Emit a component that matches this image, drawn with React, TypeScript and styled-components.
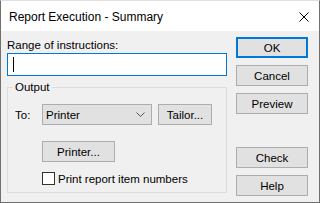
import styled, { createGlobalStyle } from 'styled-components';

const GlobalStyle = createGlobalStyle`
  html, body {
    margin: 0;
    padding: 0;
    background: #ffffff;
  }
  body {
    font-family: 'Liberation Sans', Arial, sans-serif;
    font-size: 11.5px;
    color: #000000;
  }
`;

const ReportDialog = () => {
  return (
    <Styled.Window>
      <Styled.TitleBar>
        <Styled.Title>Report Execution - Summary</Styled.Title>
        <Styled.Close aria-label="Close">
          <svg width="10" height="10" viewBox="0 0 10 10">
            <path d="M0.5 0.5 L9.5 9.5 M9.5 0.5 L0.5 9.5" stroke="#000" strokeWidth="1" fill="none" />
          </svg>
        </Styled.Close>
      </Styled.TitleBar>
      <Styled.Body>
        <Styled.Left>
          <Styled.Label>Range of instructions:</Styled.Label>
          <Styled.TextBox>
            <Styled.Caret />
          </Styled.TextBox>
          <Styled.Group>
            <Styled.Legend>Output</Styled.Legend>
            <Styled.Row>
              <Styled.ToLabel>To:</Styled.ToLabel>
              <Styled.Select>
                <span>Printer</span>
                <svg width="9" height="5" viewBox="0 0 9 5">
                  <path d="M0.5 0.5 L4.5 4.5 L8.5 0.5" stroke="#555" strokeWidth="1" fill="none" />
                </svg>
              </Styled.Select>
              <Styled.Button $width={54}>Tailor...</Styled.Button>
            </Styled.Row>
            <Styled.IndentRow $top={16}>
              <Styled.Button $width={73}>Printer...</Styled.Button>
            </Styled.IndentRow>
            <Styled.IndentRow $top={10}>
              <Styled.CheckLabel>
                <Styled.Check />
                Print report item numbers
              </Styled.CheckLabel>
            </Styled.IndentRow>
          </Styled.Group>
        </Styled.Left>
        <Styled.Right>
          <Styled.Button $width={72} $default>OK</Styled.Button>
          <Styled.Button $width={72}>Cancel</Styled.Button>
          <Styled.Button $width={72}>Preview</Styled.Button>
          <Styled.Button $width={72} $spaced>Check</Styled.Button>
          <Styled.Button $width={72}>Help</Styled.Button>
        </Styled.Right>
      </Styled.Body>
    </Styled.Window>
  );
};

export default function App() {
  return (
    <>
      <GlobalStyle />
      <ReportDialog />
    </>
  );
}

const Styled = {
  Window: styled.div`
    width: 320px;
    height: 203px;
    box-sizing: border-box;
    border: 1px solid #707070;
    border-top-color: #e0e0e0;
    background: #f0f0f0;
    display: flex;
    flex-direction: column;
  `,
  TitleBar: styled.div`
    height: 30px;
    background: #ffffff;
    display: flex;
    align-items: center;
    justify-content: space-between;
    padding: 0 10px 0 8px;
  `,
  Title: styled.div`
    font-size: 12px;
    margin-top: 1px;
  `,
  Close: styled.div`
    display: flex;
    width: 10px;
    height: 10px;
    margin-top: 1px;
  `,
  Body: styled.div`
    display: flex;
    gap: 9px;
    padding: 0 0 0 6px;
  `,
  Left: styled.div`
    width: 220px;
    display: flex;
    flex-direction: column;
    padding-top: 7px;
  `,
  Label: styled.div`
    line-height: 15px;
    height: 15px;
  `,
  TextBox: styled.div`
    height: 23px;
    box-sizing: border-box;
    border: 1px solid #0078d7;
    background: #ffffff;
    display: flex;
    align-items: center;
    padding-left: 5px;
  `,
  Caret: styled.div`
    width: 1px;
    height: 15px;
    background: #000000;
  `,
  Group: styled.fieldset`
    margin: 4px 0 0;
    padding: 0 0 8px 7px;
    border: 1px solid #dcdcdc;
    height: 113px;
    box-sizing: border-box;
  `,
  Legend: styled.legend`
    padding: 0 2px;
    margin-left: -2px;
    line-height: 14px;
  `,
  Row: styled.div`
    display: flex;
    align-items: center;
    margin-top: 10px;
  `,
  IndentRow: styled.div<{ $top: number }>`
    display: flex;
    align-items: center;
    margin-top: ${(p) => p.$top}px;
    padding-left: 27px;
  `,
  ToLabel: styled.div`
    width: 27px;
  `,
  Select: styled.div`
    width: 110px;
    height: 21px;
    box-sizing: border-box;
    border: 1px solid #adadad;
    background: #e1e1e1;
    display: flex;
    align-items: center;
    justify-content: space-between;
    padding: 0 6px 0 3px;
    margin-right: 6px;
  `,
  Button: styled.div<{ $width: number; $default?: boolean; $spaced?: boolean }>`
    width: ${(p) => p.$width}px;
    height: 21px;
    box-sizing: border-box;
    border: ${(p) => (p.$default ? '2px solid #0078d7' : '1px solid #adadad')};
    background: #e1e1e1;
    display: flex;
    align-items: center;
    justify-content: center;
    margin-top: ${(p) => (p.$spaced ? '26px' : '0')};
  `,
  Right: styled.div`
    display: flex;
    flex-direction: column;
    gap: 7px;
    padding-top: 6px;
  `,
  CheckLabel: styled.label`
    display: flex;
    align-items: center;
    gap: 3px;
  `,
  Check: styled.span`
    width: 13px;
    height: 13px;
    box-sizing: border-box;
    border: 1px solid #333333;
    background: #ffffff;
  `,
};
